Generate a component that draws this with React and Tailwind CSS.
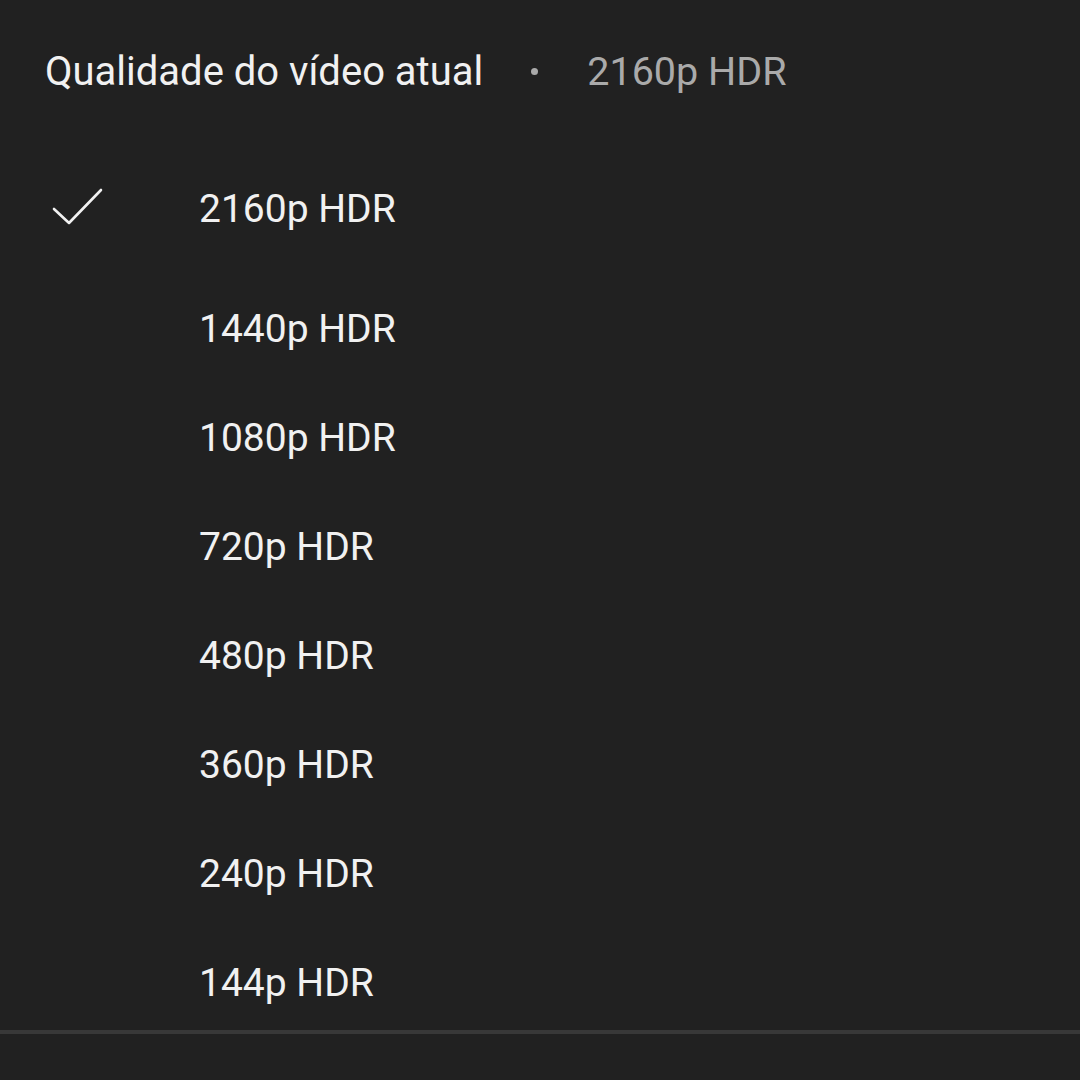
const qualities = ['1440p HDR', '1080p HDR', '720p HDR', '480p HDR', '360p HDR', '240p HDR'];

const Check = () => (
  <svg width="56" height="44" viewBox="0 0 56 44" fill="none" className="block">
    <path d="M2 22 L17 36 L49 3" stroke="#f1f1f1" strokeWidth="2.6" strokeLinecap="round" strokeLinejoin="round" />
  </svg>
);

const Row = ({ label, selected, height }) => (
  <div className={`flex items-center ${height}`}>
    <div className="w-[199px] pl-[52px] flex items-center">{selected && <Check />}</div>
    <span className="text-[39px] leading-none text-[#f1f1f1]">{label}</span>
  </div>
);

export default function App() {
  return (
    <div className="w-[1080px] h-[1080px] bg-[#212121] overflow-hidden" style={{ fontFamily: 'Roboto, "Noto Sans", sans-serif' }}>
      <div className="h-[143px] flex items-center pl-[45px] leading-none">
        <span className="text-[40px] text-[#f1f1f1]">Qualidade do vídeo atual</span>
        <span className="w-[7px] h-[7px] rounded-full bg-[#aaaaaa] ml-[48px] mr-[49px]"></span>
        <span className="text-[39.5px] text-[#aaaaaa]">2160p HDR</span>
      </div>
      <Row label="2160p HDR" selected height="h-[132px]" />
      {qualities.map(q => (
        <Row key={q} label={q} height="h-[109px]" />
      ))}
      <Row label="144p HDR" height="h-[101px] pt-[7px]" />
      <div className="h-[4px] bg-[#383838]"></div>
    </div>
  );
}
